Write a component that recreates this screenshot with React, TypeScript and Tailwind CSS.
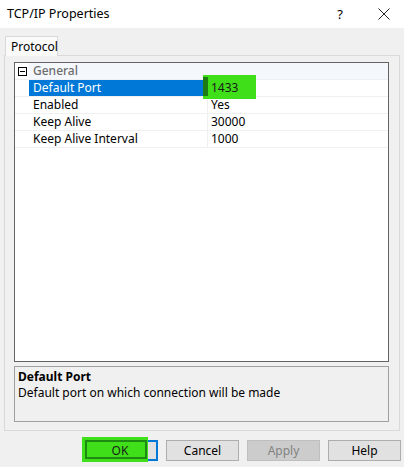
export default function App() {
  const rows = [
    { name: "Default Port", value: "1433", selected: true },
    { name: "Enabled", value: "Yes" },
    { name: "Keep Alive", value: "30000" },
    { name: "Keep Alive Interval", value: "1000" },
  ];

  return (
    <div className="relative w-[404px] h-[467px] bg-[#f0f0f0] text-[12px] text-black font-['Noto_Sans','Open_Sans',sans-serif] overflow-hidden">
      {/* Title bar */}
      <div className="h-[28px] bg-white flex items-center pl-[7px]">
        <span className="text-[12.5px] leading-none">TCP/IP Properties</span>
        <span className="ml-auto mr-[35px] text-[13px] leading-none">?</span>
        <svg className="mr-[14px]" width="12" height="12" viewBox="0 0 12 12" stroke="#222" strokeWidth="1">
          <path d="M0.5 0.5 L11.5 11.5 M11.5 0.5 L0.5 11.5" />
        </svg>
      </div>

      {/* Tab strip */}
      <div className="pt-[8px] pl-[5px] flex">
        <div className="w-[53px] h-[20px] bg-[#fafafa] border border-b-0 border-[#d9d9d9] flex items-center pl-[5px] relative -mb-px z-10">
          Protocol
        </div>
      </div>

      {/* Tab panel */}
      <div className="mx-[4px] h-[376px] border border-[#d9d9d9] bg-[#f0f0f0] pl-[9px] pr-[10px] pt-[6px] flex flex-col">
        {/* Property grid */}
        <div className="h-[300px] border border-[#646464] bg-white">
          <div className="flex h-[17px] bg-[#f4f7fc] border-b border-[#eef0f3]">
            <div className="w-[14px] bg-white flex items-center justify-center">
              <div className="w-[9px] h-[9px] border border-black flex items-center justify-center">
                <div className="w-[5px] h-px bg-black" />
              </div>
            </div>
            <div className="pl-[4px] flex items-center text-[#6d6d6d] font-medium">General</div>
          </div>
          {rows.map((r) => (
            <div key={r.name} className="flex h-[17px] border-b border-[#f0f0f0]">
              <div className="w-[14px] bg-white" />
              <div
                className={
                  r.selected
                    ? "w-[179px] pl-[4px] flex items-center bg-[#0078d7] text-white"
                    : "w-[179px] pl-[4px] flex items-center border-r border-[#f0f0f0]"
                }
              >
                {r.name}
              </div>
              <div className="relative flex-1 pl-[3px] flex items-center">
                {r.selected && (
                  <div className="absolute left-[-5px] top-[-5px] w-[53px] h-[24px] bg-[#3fe01a]">
                    <div className="w-[5px] h-[19px] bg-[#1e7a12] mt-[2px]" />
                  </div>
                )}
                <span className={r.selected ? "relative text-[#1a1a1a]" : "relative"}>{r.value}</span>
              </div>
            </div>
          ))}
        </div>

        {/* Description */}
        <div className="mt-[4px] h-[56px] border border-[#a0a0a0] bg-[#f0f0f0] px-[3px] pt-[2px] leading-[16px]">
          <div className="font-bold">Default Port</div>
          <div>Default port on which connection will be made</div>
        </div>
      </div>

      {/* Buttons */}
      <div className="flex justify-end gap-[8px] pr-[3px] pt-[9px]">
        <button className="relative w-[73px] h-[21px] bg-[#e1e1e1] border-2 border-[#0078d7]">
          {/* green annotation */}
          <div className="absolute left-[-5px] top-[-5px] w-[66px] h-[25px] bg-[#3fe01a]">
            <div className="absolute left-[3px] top-[3px] right-[1px] bottom-[3px] border-2 border-[#1e8a14]" />
          </div>
          <span className="relative text-[#1a1a1a] ml-[-3px]">OK</span>
        </button>
        <button className="w-[73px] h-[21px] bg-[#e1e1e1] border border-[#adadad]">Cancel</button>
        <button className="w-[73px] h-[21px] bg-[#cccccc] border border-[#bfbfbf] text-[#838383]">Apply</button>
        <button className="w-[73px] h-[21px] bg-[#e1e1e1] border border-[#adadad]">Help</button>
      </div>
    </div>
  );
}
